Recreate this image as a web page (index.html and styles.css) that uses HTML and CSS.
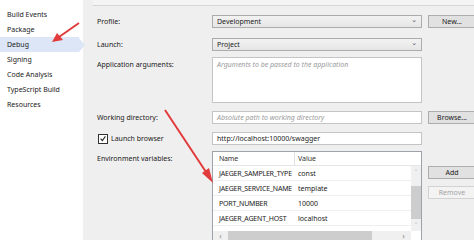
FILE: index.html
```html
<!DOCTYPE html>
<html lang="en">
<head>
    <meta charset="UTF-8">
    <title>Debug properties</title>
    <link rel="stylesheet" href="styles.css">
</head>
<body>
    <div class="page">
        <ul class="nav">
            <li>Build Events</li>
            <li>Package</li>
            <li class="active">Debug</li>
            <li>Signing</li>
            <li>Code Analysis</li>
            <li>TypeScript Build</li>
            <li>Resources</li>
        </ul>
        <div class="panel">
            <div class="topline"></div>
            <div class="row r-profile">
                <span class="lbl">Profile:</span>
                <div class="select">Development<span class="chev">&#8964;</span></div>
                <button class="btn">New...</button>
            </div>
            <div class="row r-launch">
                <span class="lbl">Launch:</span>
                <div class="select">Project<span class="chev">&#8964;</span></div>
            </div>
            <div class="row r-args">
                <span class="lbl">Application arguments:</span>
                <div class="input area ph">Arguments to be passed to the application</div>
            </div>
            <div class="row r-dir">
                <span class="lbl">Working directory:</span>
                <div class="input ph">Absolute path to working directory</div>
                <button class="btn">Browse...</button>
            </div>
            <div class="row r-browser">
                <span class="lbl check"><span class="box"><svg viewBox="0 0 10 10" width="9" height="9"><path d="M2 5.2 L4.2 7.6 L8 2.4" fill="none" stroke="#222" stroke-width="1.3"/></svg></span>Launch browser</span>
                <div class="input">http://localhost:10000/swagger</div>
            </div>
            <div class="row r-env">
                <span class="lbl">Environment variables:</span>
                <div class="table">
                    <div class="thead">
                        <span class="c-name">Name</span>
                        <span class="c-val">Value</span>
                    </div>
                    <div class="tbody">
                        <div class="rows">
                            <div class="tr"><span class="c-name">JAEGER_SAMPLER_TYPE</span><span class="c-val">const</span></div>
                            <div class="tr"><span class="c-name">JAEGER_SERVICE_NAME</span><span class="c-val">template</span></div>
                            <div class="tr"><span class="c-name">PORT_NUMBER</span><span class="c-val">10000</span></div>
                            <div class="tr"><span class="c-name">JAEGER_AGENT_HOST</span><span class="c-val">localhost</span></div>
                        </div>
                        <div class="vscroll">
                            <span class="arr">&#708;</span>
                            <span class="vthumb"></span>
                            <span class="arr">&#709;</span>
                        </div>
                    </div>
                    <div class="hscroll">
                        <span class="harr">&#8249;</span>
                        <span class="hthumb"></span>
                        <span class="harr right">&#8250;</span>
                    </div>
                </div>
                <div class="side-btns">
                    <button class="btn">Add</button>
                    <button class="btn off">Remove</button>
                </div>
            </div>
        </div>
    </div>
    <svg class="arrows" width="474" height="240" viewBox="0 0 474 240">
        <line x1="79" y1="23" x2="59" y2="37" stroke="#e23b3b" stroke-width="2"/>
        <polygon points="52,42 57,33 63,40" fill="#e23b3b"/>
        <line x1="165" y1="110" x2="206" y2="172" stroke="#e23b3b" stroke-width="2"/>
        <polygon points="213,183 202,173 209,168" fill="#e23b3b"/>
    </svg>
</body>
</html>
```

FILE: styles.css
```css
html, body {
    margin: 0;
    padding: 0;
}
body {
    width: 474px;
    height: 240px;
    overflow: hidden;
    position: relative;
    font-family: "Noto Sans", "DejaVu Sans", sans-serif;
    font-size: 7px;
    color: #1a1a1a;
}
.page {
    display: flex;
    height: 240px;
}
.nav {
    width: 83px;
    flex: none;
    margin: 0;
    padding: 7px 0 0 0;
    list-style: none;
    background-color: white;
}
.nav li {
    position: relative;
    height: 15px;
    line-height: 15px;
    padding-left: 7px;
    width: 72px;
}
.nav li.active {
    background-color: #dce6f7;
}
.nav li.active::after {
    content: "";
    position: absolute;
    right: -6px;
    top: 1px;
    border-left: 6px solid #dce6f7;
    border-top: 7px solid transparent;
    border-bottom: 7px solid transparent;
}
.panel {
    flex: 1;
    background-color: #efefef;
    padding-left: 14px;
    overflow: hidden;
}
.topline {
    height: 5px;
    margin-left: -4px;
    border-bottom: 1px solid #d6d6d6;
    background-color: #f4f4f4;
}
.row {
    display: grid;
    grid-template-columns: 109px 210px 48px;
    column-gap: 6px;
    height: 13px;
    align-items: center;
}
.r-profile { margin-top: 9px; }
.r-launch { margin-top: 10px; }
.r-args { margin-top: 6px; height: 46px; align-items: start; }
.r-dir { margin-top: 8px; }
.r-browser { margin-top: 8px; }
.r-env { margin-top: 6px; height: 92px; align-items: start; }
.r-args .lbl { padding-top: 3px; }
.r-env .lbl { padding-top: 3px; }
.select {
    box-sizing: border-box;
    height: 13px;
    line-height: 11px;
    padding-left: 4px;
    border: 1px solid #acacac;
    background: linear-gradient(#f2f2f2, #e6e6e6);
    position: relative;
}
.chev {
    position: absolute;
    right: 4px;
    top: -2px;
    font-size: 7px;
    color: #555;
}
.input {
    box-sizing: border-box;
    height: 13px;
    line-height: 11px;
    padding-left: 4px;
    border: 1px solid #c4c4c4;
    background-color: white;
    white-space: nowrap;
    overflow: hidden;
}
.input.area {
    height: 46px;
    line-height: 13px;
}
.ph {
    color: #9a9a9a;
    font-style: italic;
}
.btn {
    box-sizing: border-box;
    height: 13px;
    width: 48px;
    padding: 0;
    font-family: inherit;
    font-size: 7px;
    color: #1a1a1a;
    border: 1px solid #adadad;
    background-color: #e1e1e1;
}
.btn.off {
    color: #a3a3a3;
    border-color: #d2d2d2;
    background-color: #f3f3f3;
}
.check {
    display: flex;
    align-items: center;
    padding-left: 1px;
}
.box {
    box-sizing: border-box;
    width: 10px;
    height: 10px;
    border: 1px solid #333;
    background-color: white;
    margin-right: 3px;
    display: flex;
    align-items: center;
    justify-content: center;
}
.table {
    box-sizing: border-box;
    height: 92px;
    border: 1px solid #9ea3aa;
    background-color: white;
    display: flex;
    flex-direction: column;
}
.thead {
    display: flex;
    height: 13px;
    line-height: 13px;
    border-bottom: 1px solid #e6e6e6;
    color: #333;
}
.thead .c-name {
    border-right: 1px solid #e0e0e0;
}
.c-name {
    box-sizing: border-box;
    width: 82px;
    padding-left: 6px;
    white-space: nowrap;
    letter-spacing: -0.2px;
}
.c-val {
    padding-left: 3px;
    white-space: nowrap;
}
.tbody {
    display: flex;
    height: 65px;
}
.rows {
    flex: 1;
}
.tr {
    display: flex;
    height: 15px;
    line-height: 15px;
    border-bottom: 1px solid #efefef;
    box-sizing: border-box;
}
.vscroll {
    width: 10px;
    background-color: #f0f0f0;
    display: flex;
    flex-direction: column;
    align-items: center;
    padding-top: 2px;
}
.arr {
    height: 10px;
    line-height: 10px;
    font-size: 7px;
    color: #8a8a8a;
}
.vthumb {
    width: 10px;
    height: 35px;
    margin: 8px 0 2px 0;
    background-color: #cdcdcd;
}
.hscroll {
    height: 10px;
    display: flex;
    align-items: center;
    background-color: #f0f0f0;
    margin-right: 10px;
    position: relative;
}
.harr {
    width: 15px;
    text-align: center;
    color: #8a8a8a;
    font-size: 8px;
    line-height: 10px;
}
.harr.right {
    margin-left: auto;
}
.hthumb {
    width: 144px;
    height: 10px;
    background-color: #cdcdcd;
}
.side-btns {
    padding-top: 15px;
    display: flex;
    flex-direction: column;
    gap: 7px;
}
.arrows {
    position: absolute;
    left: 0;
    top: 0;
    pointer-events: none;
}
```
